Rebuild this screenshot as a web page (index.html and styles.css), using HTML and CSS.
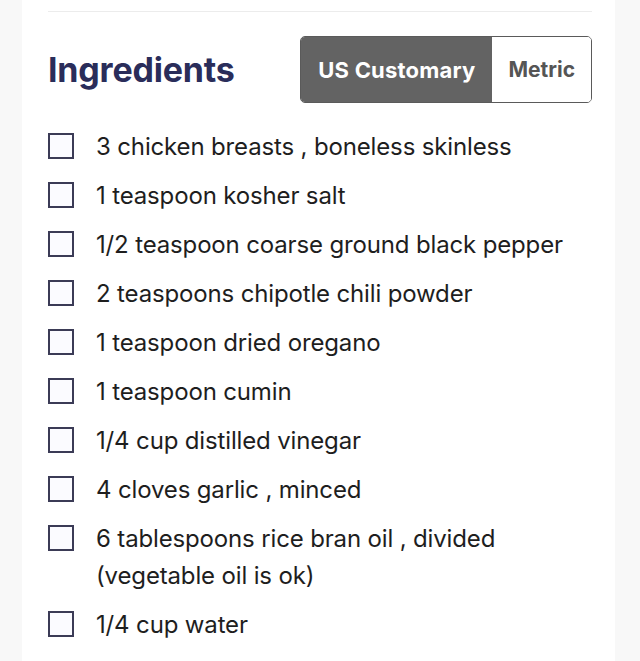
FILE: index.html
```html
<!DOCTYPE html>
<html>
<head>
<meta charset="utf-8">
<link rel="stylesheet" href="styles.css">
</head>
<body>
<div class="card">
  <div class="divider"></div>
  <div class="header">
    <h2 class="title">Ingredients</h2>
    <div class="toggle">
      <span class="opt active">US Customary</span>
      <span class="opt">Metric</span>
    </div>
  </div>
  <ul class="list">
    <li class="item"><span class="box"></span><span class="text">3 chicken breasts , boneless skinless</span></li>
    <li class="item"><span class="box"></span><span class="text">1 teaspoon kosher salt</span></li>
    <li class="item"><span class="box"></span><span class="text">1/2 teaspoon coarse ground black pepper</span></li>
    <li class="item"><span class="box"></span><span class="text">2 teaspoons chipotle chili powder</span></li>
    <li class="item"><span class="box"></span><span class="text">1 teaspoon dried oregano</span></li>
    <li class="item"><span class="box"></span><span class="text">1 teaspoon cumin</span></li>
    <li class="item"><span class="box"></span><span class="text">1/4 cup distilled vinegar</span></li>
    <li class="item"><span class="box"></span><span class="text">4 cloves garlic , minced</span></li>
    <li class="item"><span class="box"></span><span class="text">6 tablespoons rice bran oil , divided (vegetable oil is ok)</span></li>
    <li class="item"><span class="box"></span><span class="text">1/4 cup water</span></li>
  </ul>
</div>
</body>
</html>
```
FILE: styles.css
```css
html, body {
  margin: 0;
  padding: 0;
  background: #f8f8f8;
  height: 100%;
  overflow: hidden;
}
body {
  font-family: Inter, "Liberation Sans", sans-serif;
}
.card {
  margin-left: 22px;
  width: 593px;
  min-height: 661px;
  background: #ffffff;
  padding: 11px 23px 0 26px;
  box-sizing: border-box;
}
.divider {
  height: 1px;
  background: #ececec;
}
.header {
  display: flex;
  justify-content: space-between;
  align-items: center;
  margin-top: 24px;
}
.title {
  margin: 0;
  font-size: 34px;
  font-weight: 700;
  color: #2a2d5a;
  letter-spacing: -0.2px;
}
.toggle {
  display: flex;
  height: 67px;
  box-sizing: border-box;
  border: 1.5px solid #5a5a5a;
  border-radius: 5px;
  overflow: hidden;
}
.opt {
  display: flex;
  align-items: center;
  padding: 0 16px;
  font-size: 21px;
  font-weight: 700;
  color: #555555;
  background: #ffffff;
}
.opt.active {
  background: #636363;
  color: #ffffff;
  font-size: 22px;
  letter-spacing: 0.2px;
  padding: 0 17px 0 17px;
}
.list {
  list-style: none;
  margin: 25px 0 0 0;
  padding: 0;
  display: flex;
  flex-direction: column;
  gap: 12px;
}
.item {
  display: flex;
  align-items: flex-start;
  font-size: 24px;
  line-height: 37px;
  letter-spacing: -0.15px;
  color: #1e1e1e;
}
.box {
  flex: none;
  width: 26px;
  height: 26px;
  box-sizing: border-box;
  border: 2px solid #3b3b56;
  background: #fbfbff;
  margin-top: 5px;
  margin-right: 22px;
}
.text {
  flex: 1;
  padding-right: 10px;
}
```
